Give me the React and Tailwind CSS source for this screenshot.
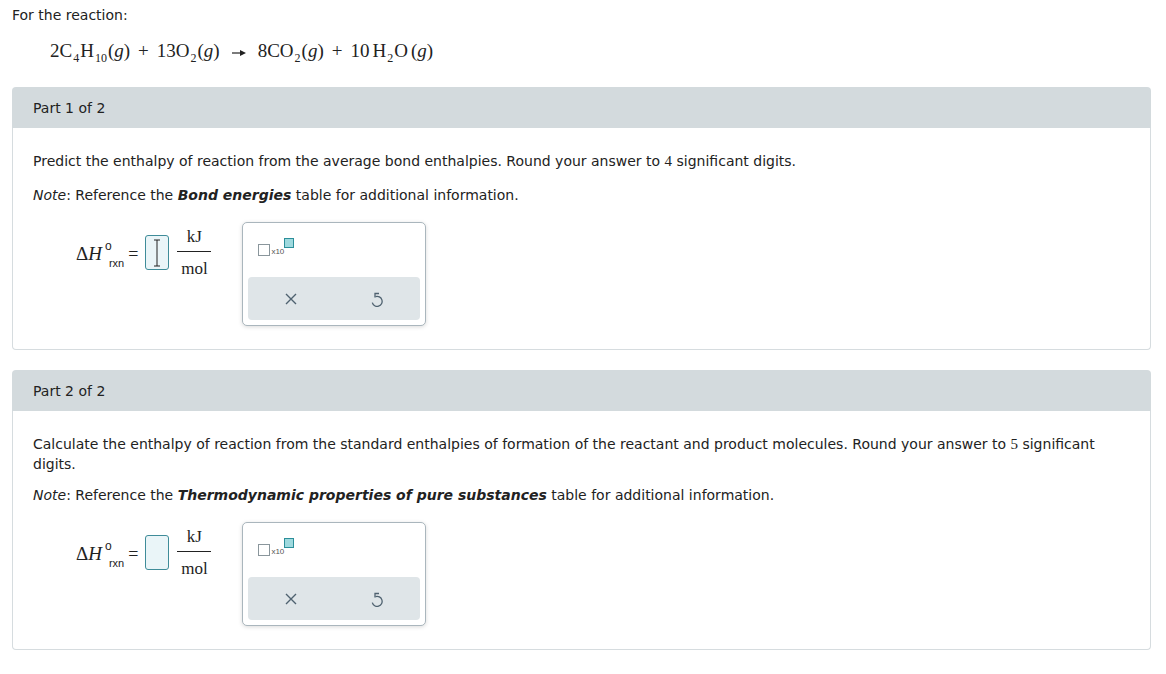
import React from 'react'

const serif = { fontFamily: '"Liberation Serif", "Times New Roman", serif' }

function Sub({ children }) {
  return <span className="text-[12px] relative top-[5px] mx-[1px]">{children}</span>
}

function G() {
  return <span>(<i>g</i>)</span>
}

function Arrow() {
  return (
    <svg width="16" height="10" viewBox="0 0 16 10" className="inline-block mx-[11px]">
      <line x1="1" y1="5" x2="11" y2="5" stroke="#222" strokeWidth="1.2" />
      <polygon points="9,2 15,5 9,8" fill="#222" />
    </svg>
  )
}

function Equation() {
  return (
    <div className="pl-[50px] mt-[16px] text-[19px] text-[#222] leading-none" style={serif}>
      2C<Sub>4</Sub>H<Sub>10</Sub><G /><span className="mx-[8px]">+</span>13O<Sub>2</Sub><G />
      <Arrow />
      8CO<Sub>2</Sub><G /><span className="mx-[8px]">+</span>10<span className="ml-[3px]">H</span><Sub>2</Sub>O<span className="ml-[3px]"><G /></span>
    </div>
  )
}

function PowerIcon() {
  return (
    <div className="flex items-end">
      <div className="w-[12px] h-[12px] border border-[#8a969c] mb-[1px]" />
      <span className="text-[8px] text-[#555] leading-none mb-[1px] ml-[1px]" style={{ fontFamily: '"Liberation Sans", Arial, sans-serif' }}>x10</span>
      <div className="w-[10px] h-[10px] border border-[#2c8f9a] bg-[#9ed9de] mb-[9px]" />
    </div>
  )
}

function Widget() {
  return (
    <div className="w-[184px] h-[104px] border border-[#aab6bd] rounded-[5px] shadow-[0_1px_4px_rgba(0,0,0,0.15)] bg-white px-[5px] pt-[15px] pb-[5px] flex flex-col">
      <div className="pl-[10px] h-[39px]">
        <PowerIcon />
      </div>
      <div className="flex-1 bg-[#dfe5e8] rounded-[4px] flex items-center">
        <div className="w-[86px] flex justify-center">
          <svg width="14" height="14" viewBox="0 0 14 14">
            <path d="M2 2L12 12M12 2L2 12" stroke="#4f6270" strokeWidth="1.4" />
          </svg>
        </div>
        <div className="w-[86px] flex justify-center">
          <svg width="14" height="16" viewBox="0 0 14 16" fill="none" stroke="#4f6270" strokeWidth="1.3">
            <path d="M5.5 5.7A5 5 0 1 1 2.3 11.7" />
            <path d="M9 2.5H5V6.5" />
          </svg>
        </div>
      </div>
    </div>
  )
}

function AnswerRow({ cursor }) {
  return (
    <div className="flex items-start mt-[17px]">
      <div className="ml-[43px] mt-[6px] flex items-center text-[#222]">
        <div className="flex items-start" style={serif}>
          <span className="text-[19px] mt-[8px]">Δ<i>H</i></span>
          <span className="flex flex-col text-[11px] leading-none ml-[1px]" style={{ fontFamily: '"Liberation Sans", Arial, sans-serif' }}>
            <span className="text-[12px] ml-[2px] mt-[4px]">o</span>
            <span className="mt-[6px] ml-[6px]">rxn</span>
          </span>
          <span className="text-[18px] mt-[8px] ml-[4px]">=</span>
        </div>
        <div className="ml-[7px] w-[24px] h-[35px] border border-[#3f8c99] bg-[#eaf5f8] rounded-[3px] flex items-center justify-center">
          {cursor && (
            <svg width="8" height="28" viewBox="0 0 8 28">
              <path d="M1 1h6M4 1v26M1 27h6" stroke="#222" strokeWidth="1" fill="none" />
            </svg>
          )}
        </div>
        <div className="ml-[8px] flex flex-col items-center text-[17px] leading-none" style={serif}>
          <span className="pb-[6px]">kJ</span>
          <span className="w-[34px] border-t border-[#222]" />
          <span className="pt-[8px]">mol</span>
        </div>
      </div>
      <div className="ml-[31px]">
        <Widget />
      </div>
    </div>
  )
}

function Card({ part, children, cursor }) {
  return (
    <div className="ml-3 mr-[15px]">
      <div className="h-[41px] bg-[#d3dadd] rounded-t-[4px] flex items-center px-[21px]">Part {part} of 2</div>
      <div className="border border-t-0 border-[#d6dcdf] rounded-b-[4px] px-[20px] pb-[23px]">
        {children}
        <AnswerRow cursor={cursor} />
      </div>
    </div>
  )
}

const num = 'text-[15px]'

export default function App() {
  return (
    <div className="min-h-screen bg-white text-[#222] text-[14px] leading-[20px]" style={{ fontFamily: '"DejaVu Sans", Verdana, sans-serif' }}>
      <div className="pl-3 pt-[5px]">For the reaction:</div>
      <Equation />
      <div className="mt-[27px]">
        <Card part={1} cursor>
          <p className="pt-[23px]">
            Predict the enthalpy of reaction from the average bond enthalpies. Round your answer to <span className={num} style={serif}>4</span> significant digits.
          </p>
          <p className="mt-[14px]">
            <i>Note</i>: Reference the <b><i>Bond energies</i></b> table for additional information.
          </p>
        </Card>
      </div>
      <div className="mt-[20px]">
        <Card part={2}>
          <p className="pt-[23px]">
            Calculate the enthalpy of reaction from the standard enthalpies of formation of the reactant and product molecules. Round your answer to <span className={num} style={serif}>5</span> significant<br />digits.
          </p>
          <p className="mt-[11px]">
            <i>Note</i>: Reference the <b><i>Thermodynamic properties of pure substances</i></b> table for additional information.
          </p>
        </Card>
      </div>
    </div>
  )
}
